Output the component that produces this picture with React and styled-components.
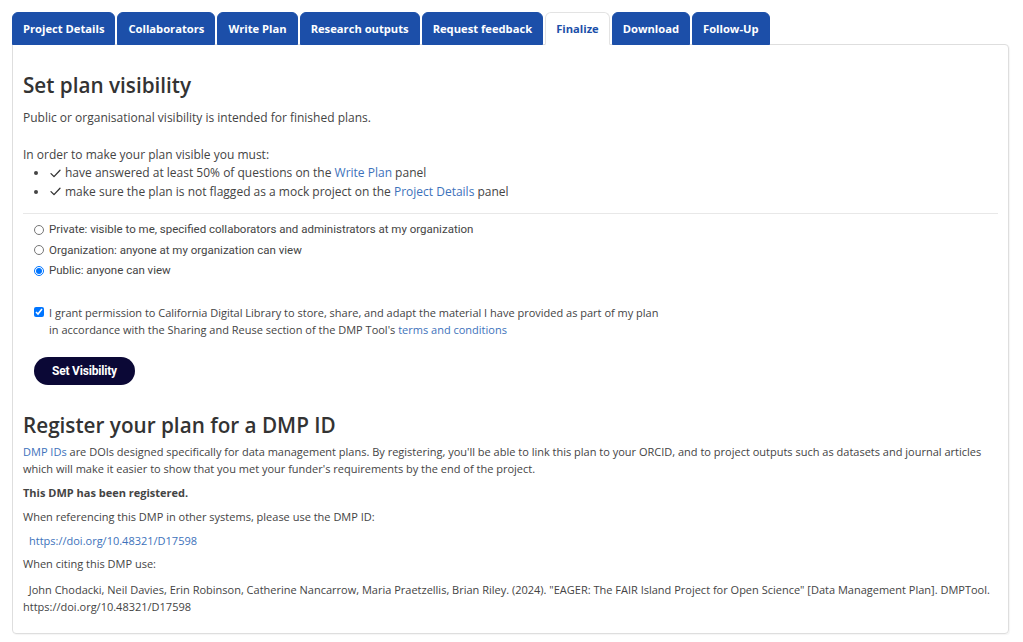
import React from 'react';
import styled, { createGlobalStyle } from 'styled-components';

const Global = createGlobalStyle`
  body {
    margin: 0;
    background: #fff;
    font-family: "Open Sans", "Noto Sans", sans-serif;
    color: #333;
  }
`

const Page = styled.div`
  padding: 12px 14px 10px 12px;
`

const Tabs = styled.div`
  display: flex;
  gap: 2px;
  position: relative;
  z-index: 1;
`

const Tab = styled.div`
  height: 33px;
  box-sizing: border-box;
  padding: 0 10px;
  display: flex;
  align-items: center;
  font-size: 11.2px;
  font-weight: 700;
  border-radius: 6px 6px 0 0;
  background: ${p => (p.$active ? '#fff' : '#1c4fa9')};
  color: ${p => (p.$active ? '#1c4fa9' : '#fff')};
  border: 1px solid ${p => (p.$active ? '#e3e3e3' : '#1c4fa9')};
  border-bottom-color: ${p => (p.$active ? '#fff' : '#1c4fa9')};
  margin-bottom: -1px;
`

const Panel = styled.div`
  border: 1px solid #dedede;
  border-radius: 0 4px 4px 4px;
  padding: 20px 10px 18px 10px;
  box-shadow: 1px 1px 1px rgba(0,0,0,0.04);
`

const H1 = styled.h1`
  font-size: 20.7px;
  font-weight: 600;
  margin: 6px 0 10px;
  color: #333;
`

const P = styled.p`
  font-size: ${p => p.$small ? '11px' : '12px'};
  line-height: 17px;
  margin: ${p => p.$m || '0 0 7px'};
  color: #444;
`

const A = styled.a`
  color: #3d72bb;
  text-decoration: none;
`

const List = styled.ul`
  margin: 0 0 12px;
  padding-left: 26px;
  font-size: 12px;
  line-height: 18.5px;
  color: #444;
`

const Check = styled.svg`
  width: 11px;
  height: 9px;
  margin: 0 4px 0 1px;
  vertical-align: -0.5px;
`

const Hr = styled.hr`
  border: 0;
  border-top: 1px solid #e8e8e8;
  margin: 0 0 7px;
`

const Radios = styled.div`
  display: flex;
  flex-direction: column;
  gap: 3px;
  padding-left: 11px;
  margin-bottom: 24px;
`

const Label = styled.label`
  display: flex;
  align-items: ${p => p.$top ? 'flex-start' : 'center'};
  gap: 3px;
  font-family: "Roboto", "Noto Sans", sans-serif;
  font-size: 11.5px;
  line-height: 17.5px;
  color: #444;
  input {
    margin: ${p => p.$top ? '3px 2px 0 0' : '0 2px 0 0'};
    width: 10px;
    height: 10px;
  }
`

const Consent = styled(Label)`
  font-family: "Open Sans", "Noto Sans", sans-serif;
  font-size: 11px;
  line-height: 17px;
  padding-left: 11px;
  margin-bottom: 19px;
  max-width: 636px;
`

const Button = styled.button`
  margin-left: 11px;
  height: 28px;
  padding: 0 18px;
  border-radius: 15px;
  border: 0;
  background: #0b0836;
  color: #fff;
  font-family: "Roboto", "Noto Sans", sans-serif;
  font-weight: 700;
  font-size: 12px;
  letter-spacing: -0.2px;
`

const H2 = styled.h2`
  font-size: 20.7px;
  font-weight: 600;
  margin: 26px 0 4px;
  color: #333;
`

const Indent = styled.div`
  padding-left: 6px;
  font-size: 11px;
  line-height: 17px;
  margin: 0 0 6px;
`

const tabs = ['Project Details', 'Collaborators', 'Write Plan', 'Research outputs', 'Request feedback', 'Finalize', 'Download', 'Follow-Up']

const Tick = () => (
  <Check viewBox="0 0 11 9">
    <path d="M1 4.6 L4 7.6 L10 1.2" fill="none" stroke="#333" strokeWidth="1.3" strokeLinecap="round" strokeLinejoin="round" />
  </Check>
)

export default function App() {
  return (
    <Page>
      <Global />
      <Tabs>
        {tabs.map(t => <Tab key={t} $active={t === 'Finalize'}>{t}</Tab>)}
      </Tabs>
      <Panel>
        <H1>Set plan visibility</H1>
        <P $m="0 0 20px">Public or organisational visibility is intended for finished plans.</P>
        <P $m="0 0 1px">In order to make your plan visible you must:</P>
        <List>
          <li><Tick />have answered at least 50% of questions on the <A href="#">Write Plan</A> panel</li>
          <li><Tick />make sure the plan is not flagged as a mock project on the <A href="#">Project Details</A> panel</li>
        </List>
        <Hr />
        <Radios>
          <Label><input type="radio" name="v" />Private: visible to me, specified collaborators and administrators at my organization</Label>
          <Label><input type="radio" name="v" />Organization: anyone at my organization can view</Label>
          <Label><input type="radio" name="v" defaultChecked />Public: anyone can view</Label>
        </Radios>
        <Consent $top>
          <input type="checkbox" defaultChecked />
          <span>I grant permission to California Digital Library to store, share, and adapt the material I have provided as part of my plan in accordance with the Sharing and Reuse section of the DMP Tool's <A href="#">terms and conditions</A></span>
        </Consent>
        <Button>Set Visibility</Button>
        <H2>Register your plan for a DMP ID</H2>
        <P $small><A href="#">DMP IDs</A> are DOIs designed specifically for data management plans. By registering, you'll be able to link this plan to your ORCID, and to project outputs such as datasets and journal articles which will make it easier to show that you met your funder's requirements by the end of the project.</P>
        <P $small><strong>This DMP has been registered.</strong></P>
        <P $small>When referencing this DMP in other systems, please use the DMP ID:</P>
        <Indent><A href="#">https://doi.org/10.48321/D17598</A></Indent>
        <P $small $m="0 0 9px">When citing this DMP use:</P>
        <P $small $m="0">&nbsp; John Chodacki, Neil Davies, Erin Robinson, Catherine Nancarrow, Maria Praetzellis, Brian Riley. (2024). "EAGER: The FAIR Island Project for Open Science" [Data Management Plan]. DMPTool. https://doi.org/10.48321/D17598</P>
      </Panel>
    </Page>
  )
}
